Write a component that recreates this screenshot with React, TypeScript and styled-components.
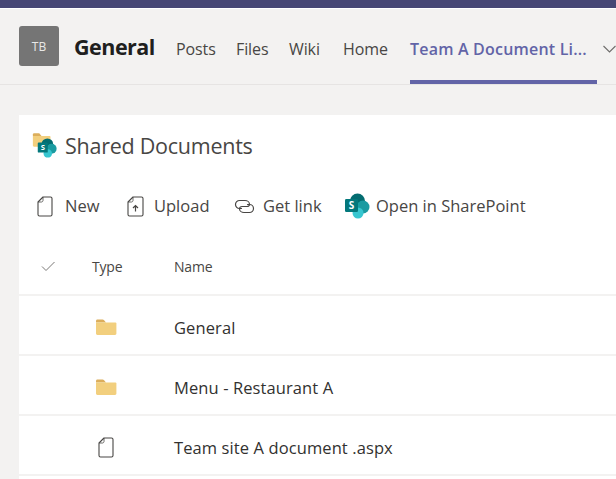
import React from "react";
import styled, { createGlobalStyle } from "styled-components";

const GlobalStyle = createGlobalStyle`
  html, body {
    margin: 0;
    padding: 0;
    height: 100%;
    overflow: hidden;
    background: #f3f2f1;
    font-family: "Open Sans", "Noto Sans", sans-serif;
  }
`;

const FolderIcon = ({ width = 22 }: { width?: number }) => (
  <svg width={width} height={(width * 18) / 22} viewBox="0 0 22 18">
    <path d="M1 3C1 2.200 1.600 1.500 2.400 1.500h5.200c.5 0 1 .2 1.300.5L11 4.500H1z" fill="#dcae5c" />
    <path d="M1 4.500h19.500c.5 0 .9.4.9.9v10.200c0 .8-.6 1.400-1.400 1.400H2.400C1.600 17 1 16.400 1 15.600z" fill="#f2cf7e" />
  </svg>
);

const SharePointIcon = ({ size }: { size: number }) => (
  <svg width={size} height={size} viewBox="0 0 26 26">
    <circle cx="13.500" cy="8" r="7.500" fill="#036c70" />
    <circle cx="19" cy="14" r="6.500" fill="#1a9ba1" />
    <circle cx="14" cy="20" r="5.500" fill="#37c6d0" />
    <rect x="1" y="6" width="13" height="13" rx="1.200" fill="#03787c" />
    <text x="7.500" y="16.200" fontSize="10" fontWeight="700" fill="#ffffff" textAnchor="middle" fontFamily="Open Sans, sans-serif">S</text>
  </svg>
);

const PageIcon = () => (
  <svg width="16" height="21" viewBox="0 0 16 21" fill="none" stroke="#484644" strokeWidth="1.100">
    <path d="M6 1h7.500c.8 0 1.500.7 1.500 1.500v16c0 .8-.7 1.500-1.500 1.500h-11C1.700 20 1 19.300 1 18.500V6z" strokeLinejoin="round" />
    <path d="M6 1v3.500c0 .8-.7 1.500-1.500 1.500H1" strokeWidth="0.800" />
  </svg>
);

const UploadIcon = () => (
  <svg width="17" height="21" viewBox="0 0 17 21" fill="none" stroke="#484644" strokeWidth="1.100">
    <path d="M6 1h8.500c.8 0 1.500.7 1.500 1.500v16c0 .8-.7 1.500-1.500 1.500h-12C1.700 20 1 19.300 1 18.500V6z" strokeLinejoin="round" />
    <path d="M6 1v3.500c0 .8-.7 1.500-1.500 1.500H1" strokeWidth="0.800" />
    <path d="M8.500 15.500V9.500M6 12l2.500-2.500L11 12" strokeWidth="1.200" />
  </svg>
);

const LinkIcon = () => (
  <svg width="21" height="15" viewBox="0 0 21 15" fill="none" stroke="#484644" strokeWidth="1.200" strokeLinecap="round">
    <path d="M7.500 9.500H5.500A4 4 0 0 1 5.500 1.500H11c2.500 0 4.500 1.800 4.500 3.800 0 1.200-1 2.200-2.500 2.200H9.500" />
    <path d="M13.500 5.500h2a4 4 0 0 1 0 8H10c-2.500 0-4.500-1.800-4.500-3.800 0-1.200 1-2.200 2.500-2.200h3.500" />
  </svg>
);

const Chevron = () => (
  <svg width="13" height="8" viewBox="0 0 13 8" fill="none" stroke="#6e6d6b" strokeWidth="1.100">
    <path d="M.5 1l6 6 6-6" />
  </svg>
);

const Check = () => (
  <svg width="14" height="11" viewBox="0 0 14 11" fill="none" stroke="#7a7877" strokeWidth="1">
    <path d="M1 5.500l4 4 8.500-8.500" />
  </svg>
);

const TopBar = styled.div`
  height: 8px;
  background: #464775;
  border-bottom: 1px solid #ffffff;
`;

const Header = styled.header`
  display: flex;
  align-items: stretch;
  padding-left: 19px;
  border-bottom: 1px solid #e6e4e3;
  box-sizing: border-box;
  height: 76px;
  overflow: hidden;
`;

const Avatar = styled.div`
  width: 40px;
  height: 40px;
  margin-top: 17px;
  margin-right: 15px;
  border-radius: 3px;
  background: #757575;
  color: #e8e8e8;
  font-size: 12px;
  display: flex;
  align-items: center;
  justify-content: center;
  flex-shrink: 0;
`;

const ChannelName = styled.h1`
  margin: 0;
  width: 102px;
  padding-top: 24px;
  font-size: 21.500px;
  line-height: 28px;
  font-weight: 700;
  letter-spacing: -0.5px;
  color: #201f1e;
  flex-shrink: 0;
`;

const Tab = styled.div<{ $width: number; $active?: boolean }>`
  width: ${(p) => p.$width}px;
  flex-shrink: 0;
  padding-top: 28px;
  box-sizing: border-box;
  font-size: 16px;
  line-height: 24px;
  letter-spacing: ${(p) => (p.$active ? "0.2px" : "-0.1px")};
  white-space: nowrap;
  font-weight: ${(p) => (p.$active ? 600 : 400)};
  color: ${(p) => (p.$active ? "#6264a7" : "#484644")};
  border-bottom: 4px solid ${(p) => (p.$active ? "#6264a7" : "transparent")};
`;

const TabChevron = styled.div`
  padding: 27px 0 0 6px;
`;

const Card = styled.main`
  margin: 30px 0 0 19px;
  background: #ffffff;
  height: 364px;
`;

const Title = styled.div`
  display: flex;
  align-items: center;
  height: 62px;
  padding-left: 13px;
`;

const TitleIcon = styled.div`
  position: relative;
  width: 33px;
  height: 30px;
  flex-shrink: 0;
`;

const TitleFolder = styled.div`
  position: absolute;
  left: 0;
  top: 0;
`;

const TitleBadge = styled.div`
  position: absolute;
  left: 5px;
  top: 7px;
`;

const TitleText = styled.h2`
  margin: 0;
  font-size: 21.500px;
  line-height: 30px;
  font-weight: 400;
  letter-spacing: -0.25px;
  color: #484644;
`;

const Toolbar = styled.div`
  display: flex;
  align-items: center;
  height: 58px;
  padding-left: 18px;
`;

const Action = styled.div<{ $width: number }>`
  display: flex;
  align-items: center;
  width: ${(p) => p.$width}px;
  flex-shrink: 0;
  font-size: 16.500px;
  color: #484644;
  white-space: nowrap;
`;

const ActionIcon = styled.span<{ $width: number }>`
  display: flex;
  align-items: center;
  width: ${(p) => p.$width}px;
`;

const ActionLabel = styled.span`
  margin-top: -2px;
`;

const HeadRow = styled.div`
  display: grid;
  grid-template-columns: 73px 82px 1fr;
  align-items: center;
  height: 60px;
  margin-top: 1px;
  padding-top: 3px;
  border-bottom: 2px solid #f3f2f1;
  box-sizing: border-box;
  font-size: 14px;
  letter-spacing: -0.2px;
  color: #484644;
`;

const CheckCell = styled.div`
  display: flex;
  padding-left: 22px;
`;

const Row = styled.div`
  display: grid;
  grid-template-columns: 73px 82px 1fr;
  align-items: center;
  height: 60px;
  padding-top: 4px;
  border-bottom: 2px solid #f3f2f1;
  box-sizing: border-box;
  font-size: 16.500px;
  letter-spacing: 0.1px;
  color: #323130;
`;

const TypeCell = styled.div`
  display: flex;
  justify-content: center;
  width: 28px;
`;

const files = [
  { name: "General", folder: true },
  { name: "Menu - Restaurant A", folder: true },
  { name: "Team site A document .aspx", folder: false },
];

export default function App() {
  return (
    <>
      <GlobalStyle />
      <TopBar />
      <Header>
        <Avatar>TB</Avatar>
        <ChannelName>General</ChannelName>
        <Tab $width={60}>Posts</Tab>
        <Tab $width={53}>Files</Tab>
        <Tab $width={54}>Wiki</Tab>
        <Tab $width={67}>Home</Tab>
        <Tab $width={187} $active>
          Team A Document Li...
        </Tab>
        <TabChevron>
          <Chevron />
        </TabChevron>
      </Header>
      <Card>
        <Title>
          <TitleIcon>
            <TitleFolder>
              <FolderIcon width={19} />
            </TitleFolder>
            <TitleBadge>
              <SharePointIcon size={20} />
            </TitleBadge>
          </TitleIcon>
          <TitleText>Shared Documents</TitleText>
        </Title>
        <Toolbar>
          <Action $width={90}>
            <ActionIcon $width={28}>
              <PageIcon />
            </ActionIcon>
            <ActionLabel>New</ActionLabel>
          </Action>
          <Action $width={107}>
            <ActionIcon $width={27}>
              <UploadIcon />
            </ActionIcon>
            <ActionLabel>Upload</ActionLabel>
          </Action>
          <Action $width={110}>
            <ActionIcon $width={29}>
              <LinkIcon />
            </ActionIcon>
            <ActionLabel>Get link</ActionLabel>
          </Action>
          <Action $width={200}>
            <ActionIcon $width={32}>
              <SharePointIcon size={26} />
            </ActionIcon>
            <ActionLabel>Open in SharePoint</ActionLabel>
          </Action>
        </Toolbar>
        <HeadRow>
          <CheckCell>
            <Check />
          </CheckCell>
          <div>Type</div>
          <div>Name</div>
        </HeadRow>
        {files.map((file) => (
          <Row key={file.name}>
            <div />
            <TypeCell>{file.folder ? <FolderIcon /> : <PageIcon />}</TypeCell>
            <div>{file.name}</div>
          </Row>
        ))}
      </Card>
    </>
  );
}
